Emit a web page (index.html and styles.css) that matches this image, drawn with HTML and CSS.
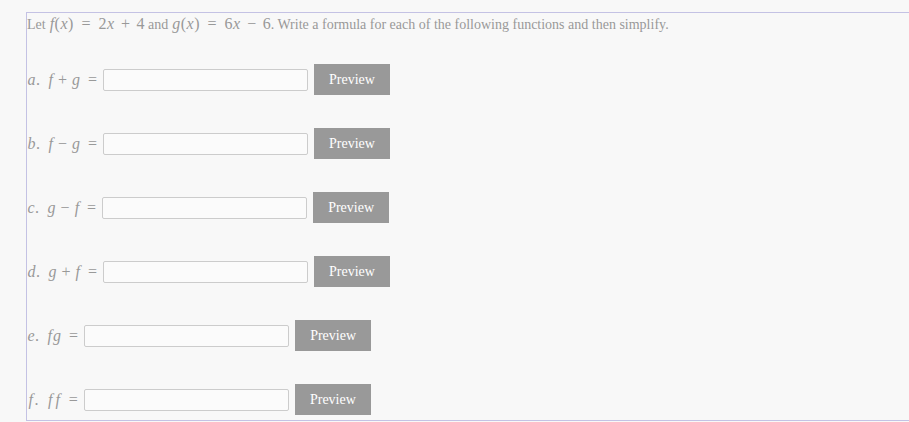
FILE: index.html
```html
<!DOCTYPE html>
<html>
<head>
<meta charset="utf-8">
<link rel="stylesheet" href="styles.css">
</head>
<body>
<div class="problem">
  <p class="intro">Let <span class="m"><i>f</i>(<i>x</i>)<span class="rel">=</span>2<i>x</i><span class="op">+</span>4</span> and <span class="m"><i>g</i>(<i>x</i>)<span class="rel">=</span>6<i>x</i><span class="op">−</span>6</span>. Write a formula for each of the following functions and then simplify.</p>
  <div class="row"><span class="label m"><i>a</i>. &nbsp;<i>f</i><span class="op">+</span><i>g</i><span class="rel last">=</span></span><input class="answer" type="text"><button class="preview">Preview</button></div>
  <div class="row"><span class="label m"><i>b</i>. &nbsp;<i>f</i><span class="op">−</span><i>g</i><span class="rel last">=</span></span><input class="answer" type="text"><button class="preview">Preview</button></div>
  <div class="row"><span class="label m"><i>c</i>. &nbsp;<i>g</i><span class="op">−</span><i>f</i><span class="rel last">=</span></span><input class="answer" type="text"><button class="preview">Preview</button></div>
  <div class="row"><span class="label m"><i>d</i>. &nbsp;<i>g</i><span class="op">+</span><i>f</i><span class="rel last">=</span></span><input class="answer" type="text"><button class="preview">Preview</button></div>
  <div class="row"><span class="label m"><i>e</i>. &nbsp;<i>f</i><i>g</i><span class="rel last">=</span></span><input class="answer" type="text"><button class="preview">Preview</button></div>
  <div class="row"><span class="label m wide"><i>f</i>. &nbsp;<i>f</i><i>f</i><span class="rel last">=</span></span><input class="answer" type="text"><button class="preview">Preview</button></div>
</div>
</body>
</html>
```
FILE: styles.css
```css
html, body {
  margin: 0;
  padding: 0;
  background: #f8f8f8;
}
body {
  font-family: "Liberation Serif", "Times New Roman", serif;
  color: #999;
  overflow: hidden;
}
.problem {
  margin: 12px 0 0 26px;
  width: 900px;
  height: 407px;
  border: 1px solid #c4c2e4;
  border-right: none;
  box-sizing: content-box;
}
.intro {
  margin: 0;
  font-size: 14px;
  line-height: 22px;
  height: 22px;
  white-space: nowrap;
}
.m {
  font-family: "Liberation Serif", "Times New Roman", serif;
  font-size: 16px;
  font-variant-ligatures: none;
}
.m i {
  font-style: italic;
  padding: 0 0.5px;
}
.m.wide i {
  padding: 0 1.5px;
}
.rel {
  margin: 0 7.5px;
}
.rel.last {
  margin-right: 0;
}
.op {
  margin: 0 4.5px;
}
.intro .rel {
  margin: 0 8px;
}
.intro .op {
  margin: 0 6.5px;
}
.row {
  display: flex;
  align-items: center;
  height: 31px;
  margin-bottom: 33px;
}
.intro + .row {
  margin-top: 29px;
}
.label {
  white-space: nowrap;
  margin-right: 6px;
}
.answer {
  width: 205px;
  height: 22px;
  box-sizing: border-box;
  border: 1px solid #ccc;
  border-radius: 2px;
  background: #fbfbfb;
  margin: 0 6px 0 0;
  padding: 0;
}
.preview {
  width: 76px;
  height: 31px;
  border: none;
  background: #999;
  color: #fff;
  font-family: "Liberation Serif", "Times New Roman", serif;
  font-size: 14px;
  padding: 0;
}
```
